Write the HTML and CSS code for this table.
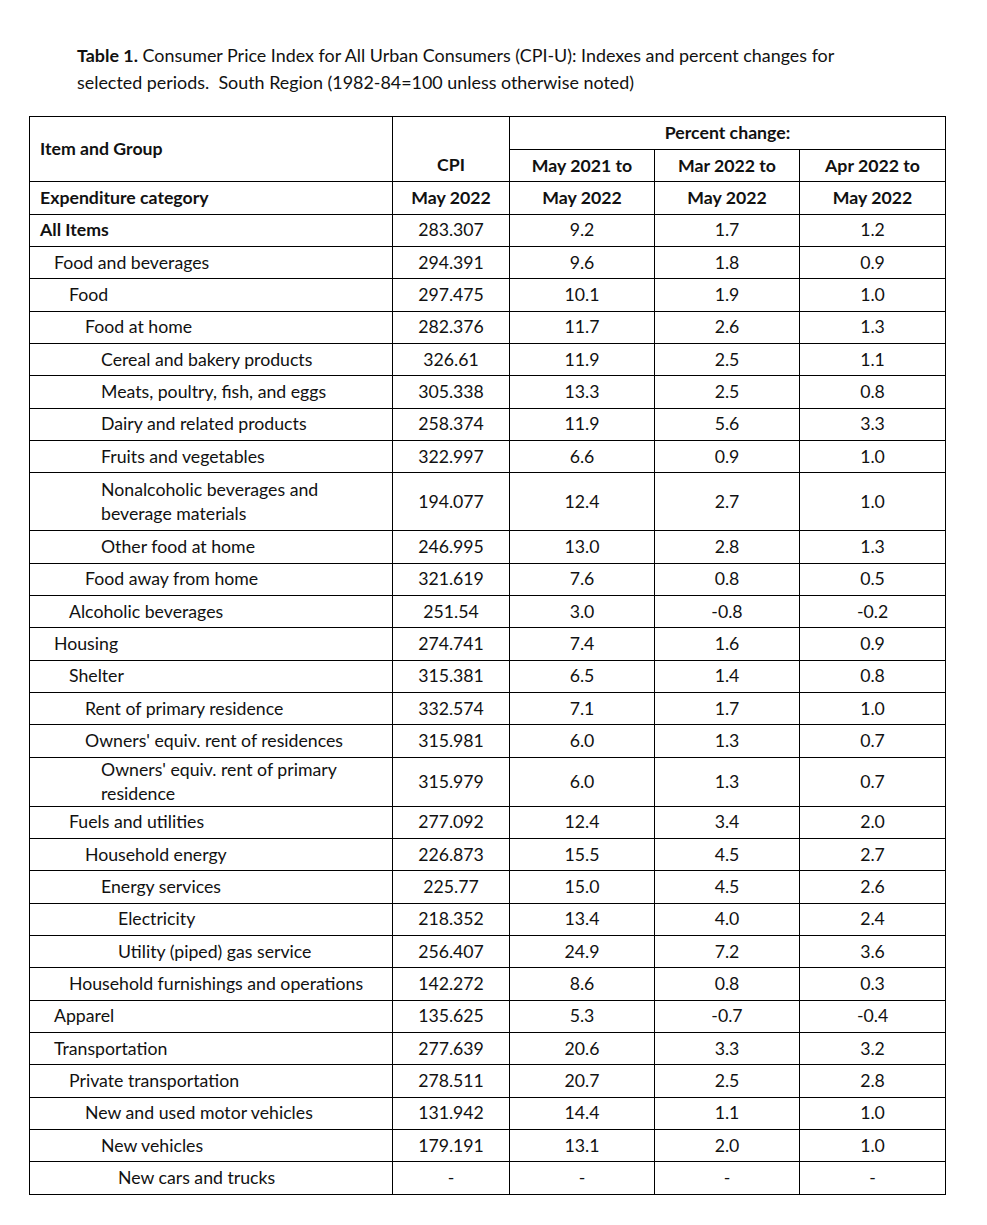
FILE: index.html
```html
<!DOCTYPE html>
<html>
<head>
<meta charset="utf-8">
<link rel="stylesheet" href="styles.css">
</head>
<body>
<div class="page">
  <p class="title"><b>Table 1.</b> Consumer Price Index for All Urban Consumers (CPI-U): Indexes and percent changes for<br>selected periods.&nbsp; South Region (1982-84=100 unless otherwise noted)</p>
  <table class="cpi">
    <colgroup>
      <col class="c-item"><col class="c-cpi"><col class="c-pct"><col class="c-pct"><col class="c-pct2">
    </colgroup>
    <thead>
      <tr class="h1">
        <th rowspan="2" class="item mid">Item and Group</th>
        <th rowspan="2" class="bot">CPI</th>
        <th colspan="3">Percent change:</th>
      </tr>
      <tr class="h2">
        <th>May 2021 to</th><th>Mar 2022 to</th><th>Apr 2022 to</th>
      </tr>
      <tr class="h3">
        <th class="item">Expenditure category</th><th>May 2022</th><th>May 2022</th><th>May 2022</th><th>May 2022</th>
      </tr>
    </thead>
    <tbody>
      <tr><td class="item bold">All Items</td><td>283.307</td><td>9.2</td><td>1.7</td><td>1.2</td></tr>
      <tr><td class="item l1">Food and beverages</td><td>294.391</td><td>9.6</td><td>1.8</td><td>0.9</td></tr>
      <tr><td class="item l2">Food</td><td>297.475</td><td>10.1</td><td>1.9</td><td>1.0</td></tr>
      <tr><td class="item l3">Food at home</td><td>282.376</td><td>11.7</td><td>2.6</td><td>1.3</td></tr>
      <tr><td class="item l4">Cereal and bakery products</td><td>326.61</td><td>11.9</td><td>2.5</td><td>1.1</td></tr>
      <tr><td class="item l4">Meats, poultry, fish, and eggs</td><td>305.338</td><td>13.3</td><td>2.5</td><td>0.8</td></tr>
      <tr><td class="item l4">Dairy and related products</td><td>258.374</td><td>11.9</td><td>5.6</td><td>3.3</td></tr>
      <tr><td class="item l4">Fruits and vegetables</td><td>322.997</td><td>6.6</td><td>0.9</td><td>1.0</td></tr>
      <tr class="tall"><td class="item l4">Nonalcoholic beverages and<br>beverage materials</td><td>194.077</td><td>12.4</td><td>2.7</td><td>1.0</td></tr>
      <tr><td class="item l4">Other food at home</td><td>246.995</td><td>13.0</td><td>2.8</td><td>1.3</td></tr>
      <tr><td class="item l3">Food away from home</td><td>321.619</td><td>7.6</td><td>0.8</td><td>0.5</td></tr>
      <tr><td class="item l2">Alcoholic beverages</td><td>251.54</td><td>3.0</td><td>-0.8</td><td>-0.2</td></tr>
      <tr><td class="item l1">Housing</td><td>274.741</td><td>7.4</td><td>1.6</td><td>0.9</td></tr>
      <tr><td class="item l2">Shelter</td><td>315.381</td><td>6.5</td><td>1.4</td><td>0.8</td></tr>
      <tr><td class="item l3">Rent of primary residence</td><td>332.574</td><td>7.1</td><td>1.7</td><td>1.0</td></tr>
      <tr><td class="item l3">Owners' equiv. rent of residences</td><td>315.981</td><td>6.0</td><td>1.3</td><td>0.7</td></tr>
      <tr class="two"><td class="item l4">Owners' equiv. rent of primary<br>residence</td><td>315.979</td><td>6.0</td><td>1.3</td><td>0.7</td></tr>
      <tr><td class="item l2">Fuels and utilities</td><td>277.092</td><td>12.4</td><td>3.4</td><td>2.0</td></tr>
      <tr><td class="item l3">Household energy</td><td>226.873</td><td>15.5</td><td>4.5</td><td>2.7</td></tr>
      <tr><td class="item l4">Energy services</td><td>225.77</td><td>15.0</td><td>4.5</td><td>2.6</td></tr>
      <tr><td class="item l5">Electricity</td><td>218.352</td><td>13.4</td><td>4.0</td><td>2.4</td></tr>
      <tr><td class="item l5">Utility (piped) gas service</td><td>256.407</td><td>24.9</td><td>7.2</td><td>3.6</td></tr>
      <tr><td class="item l2">Household furnishings and operations</td><td>142.272</td><td>8.6</td><td>0.8</td><td>0.3</td></tr>
      <tr><td class="item l1">Apparel</td><td>135.625</td><td>5.3</td><td>-0.7</td><td>-0.4</td></tr>
      <tr><td class="item l1">Transportation</td><td>277.639</td><td>20.6</td><td>3.3</td><td>3.2</td></tr>
      <tr><td class="item l2">Private transportation</td><td>278.511</td><td>20.7</td><td>2.5</td><td>2.8</td></tr>
      <tr><td class="item l3">New and used motor vehicles</td><td>131.942</td><td>14.4</td><td>1.1</td><td>1.0</td></tr>
      <tr><td class="item l4">New vehicles</td><td>179.191</td><td>13.1</td><td>2.0</td><td>1.0</td></tr>
      <tr><td class="item l5">New cars and trucks</td><td>-</td><td>-</td><td>-</td><td>-</td></tr>
    </tbody>
  </table>
</div>
</body>
</html>
```

FILE: styles.css
```css
html, body {
  margin: 0;
  padding: 0;
  background: #ffffff;
}

body {
  font-family: Lato, "Open Sans", sans-serif;
  color: #111111;
}

.page {
  padding: 42px 0 0 29px;
}

.title {
  margin: 0 0 20px 48px;
  font-size: 17.9px;
  line-height: 27px;
  white-space: nowrap;
}

.title b {
  font-weight: 700;
}

.cpi {
  border-collapse: collapse;
  table-layout: fixed;
  width: 917px;
  font-size: 17.7px;
  line-height: 24px;
}

.c-item { width: 363px; }
.c-cpi { width: 117px; }
.c-pct { width: 145px; }
.c-pct2 { width: 146px; }

.cpi th,
.cpi td {
  border: 1px solid #000;
  padding: 0;
  text-align: center;
  vertical-align: middle;
  height: 32.33px;
  box-sizing: border-box;
}

.cpi th {
  font-weight: 700;
}

.cpi .h1 th { height: 33px; }

.cpi th.mid { vertical-align: middle; }
.cpi th.bot { vertical-align: bottom; padding-bottom: 4px; }

.cpi .item {
  text-align: left;
  padding-left: 10px;
}

.cpi .bold { font-weight: 700; }

.cpi .l1 { padding-left: 24px; }
.cpi .l2 { padding-left: 39px; }
.cpi .l3 { padding-left: 55px; }
.cpi .l4 { padding-left: 71px; }
.cpi .l5 { padding-left: 88px; }

.cpi .tall td { height: 58px; }
.cpi .two td { height: 48px; }
```
